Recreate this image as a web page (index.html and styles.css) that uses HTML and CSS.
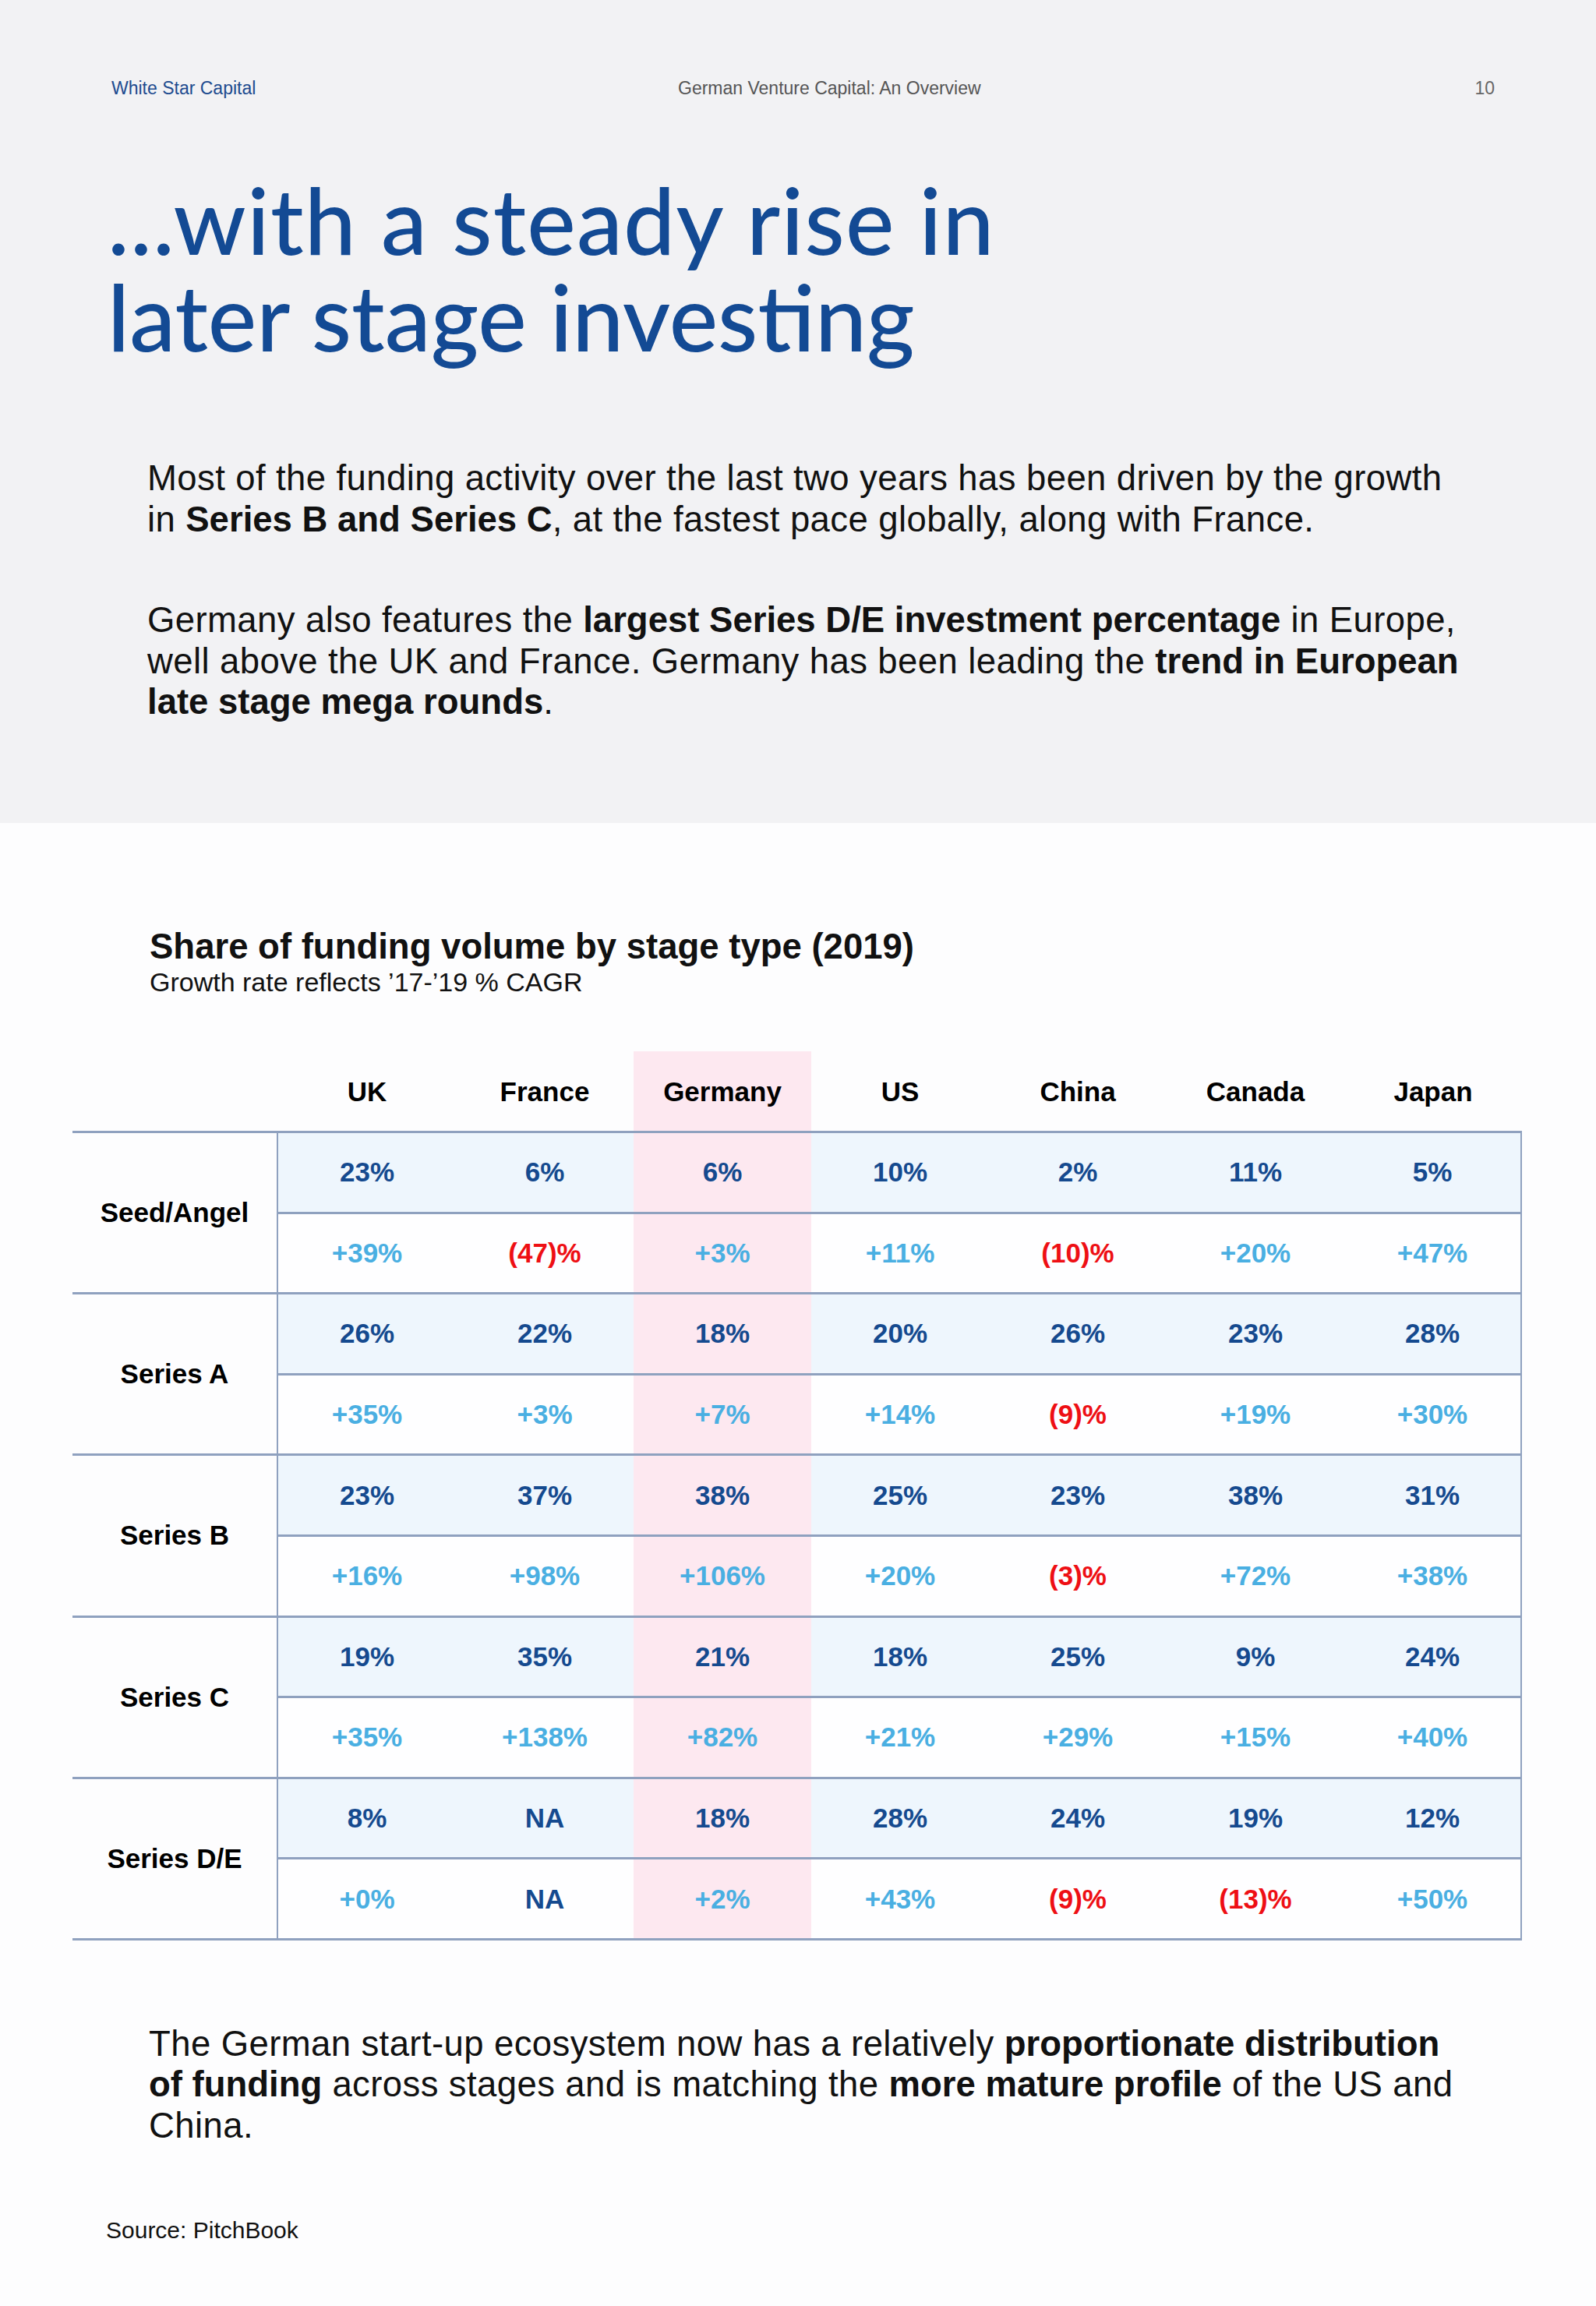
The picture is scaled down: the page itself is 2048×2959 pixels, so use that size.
FILE: index.html
```html
<!DOCTYPE html>
<html lang="en">
<head>
<meta charset="utf-8">
<title>German Venture Capital: An Overview</title>
<link rel="stylesheet" href="styles.css">
</head>
<body>
<section class="intro">
  <header class="page-head">
    <span class="brand">White Star Capital</span>
    <span class="doc-title">German Venture Capital: An Overview</span>
    <span class="page-num">10</span>
  </header>
  <h1 class="headline"><span class="hl-line">...with a steady rise in</span><span class="hl-line">later stage investing</span></h1>
  <p class="lead">Most of the funding activity over the last two years has been driven by the growth<br>in <b>Series B and Series C</b>, at the fastest pace globally, along with France.</p>
  <p class="lead lead-2">Germany also features the <b>largest Series D/E investment percentage</b> in Europe,<br>well above the UK and France. Germany has been leading the <b>trend in European<br>late stage mega rounds</b>.</p>
</section>

<section class="chart">
  <h2 class="chart-title">Share of funding volume by stage type (2019)</h2>
  <p class="chart-sub">Growth rate reflects ’17-’19 % CAGR</p>

  <div class="table">
    <div class="th corner"></div>
    <div class="th">UK</div>
    <div class="th">France</div>
    <div class="th de">Germany</div>
    <div class="th">US</div>
    <div class="th">China</div>
    <div class="th">Canada</div>
    <div class="th last">Japan</div>

    <div class="label">Seed/Angel</div>
    <div class="v">23%</div><div class="v">6%</div><div class="v de">6%</div><div class="v">10%</div><div class="v">2%</div><div class="v">11%</div><div class="v last">5%</div>
    <div class="g">+39%</div><div class="g neg">(47)%</div><div class="g de">+3%</div><div class="g">+11%</div><div class="g neg">(10)%</div><div class="g">+20%</div><div class="g last">+47%</div>

    <div class="label">Series A</div>
    <div class="v">26%</div><div class="v">22%</div><div class="v de">18%</div><div class="v">20%</div><div class="v">26%</div><div class="v">23%</div><div class="v last">28%</div>
    <div class="g">+35%</div><div class="g">+3%</div><div class="g de">+7%</div><div class="g">+14%</div><div class="g neg">(9)%</div><div class="g">+19%</div><div class="g last">+30%</div>

    <div class="label">Series B</div>
    <div class="v">23%</div><div class="v">37%</div><div class="v de">38%</div><div class="v">25%</div><div class="v">23%</div><div class="v">38%</div><div class="v last">31%</div>
    <div class="g">+16%</div><div class="g">+98%</div><div class="g de">+106%</div><div class="g">+20%</div><div class="g neg">(3)%</div><div class="g">+72%</div><div class="g last">+38%</div>

    <div class="label">Series C</div>
    <div class="v">19%</div><div class="v">35%</div><div class="v de">21%</div><div class="v">18%</div><div class="v">25%</div><div class="v">9%</div><div class="v last">24%</div>
    <div class="g">+35%</div><div class="g">+138%</div><div class="g de">+82%</div><div class="g">+21%</div><div class="g">+29%</div><div class="g">+15%</div><div class="g last">+40%</div>

    <div class="label">Series D/E</div>
    <div class="v">8%</div><div class="v">NA</div><div class="v de">18%</div><div class="v">28%</div><div class="v">24%</div><div class="v">19%</div><div class="v last">12%</div>
    <div class="g">+0%</div><div class="g na">NA</div><div class="g de">+2%</div><div class="g">+43%</div><div class="g neg">(9)%</div><div class="g neg">(13)%</div><div class="g last">+50%</div>
  </div>

  <p class="lead closing">The German start-up ecosystem now has a relatively <b>proportionate distribution<br>of funding</b> across stages and is matching the <b>more mature profile</b> of the US and<br>China.</p>

  <p class="source">Source: PitchBook</p>
</section>
</body>
</html>
```

FILE: styles.css
```css
* { box-sizing: border-box; }

html, body {
  margin: 0;
  padding: 0;
}

body {
  width: 2048px;
  height: 2959px;
  background: #fdfdfe;
  font-family: "Liberation Sans", Arial, sans-serif;
  color: #111;
  overflow: hidden;
}

.intro {
  height: 1056px;
  background: #f2f2f4;
  padding-top: 100px;
}

.page-head {
  display: grid;
  grid-template-columns: 727px 1fr auto;
  padding: 0 130px 0 143px;
  font-size: 23px;
  line-height: 26px;
}

.brand { color: #1d4b8f; }
.doc-title { color: #555; }
.page-num { color: #666; }

.headline {
  margin: 94px 0 0 138px;
  font-family: "Lato", "Liberation Sans", sans-serif;
  font-weight: 500;
  font-size: 118px;
  color: #134a94;
}

.hl-line {
  display: block;
  height: 124px;
  line-height: 124px;
}

.hl-line:first-child {
  letter-spacing: 1.2px;
}

.lead {
  margin: 120px 0 0 189px;
  font-size: 45.5px;
  line-height: 52.5px;
  letter-spacing: 0.4px;
  color: #111;
}

.lead b {
  font-weight: 700;
  letter-spacing: 0;
}

.lead-2 { margin-top: 77px; }

.chart {
  padding-top: 133px;
}

.chart-title {
  margin: 0 0 0 192px;
  font-size: 45.5px;
  line-height: 51px;
  font-weight: 700;
  color: #111;
}

.chart-sub {
  margin: 0 0 0 192px;
  font-size: 34px;
  line-height: 40px;
  color: #111;
}

.table {
  margin: 69px 0 0 93px;
  width: 1860px;
  display: grid;
  grid-template-columns: 264px repeat(7, 228px);
  grid-template-rows: 102px repeat(10, 103.6px);
  border-bottom: 3px solid #8fa1bf;
  font-weight: 700;
  font-size: 35px;
}

.table > div {
  display: flex;
  align-items: center;
  justify-content: center;
}

.th {
  color: #000;
  padding-top: 2px;
}

.label {
  grid-row: span 2;
  border-top: 3px solid #8fa1bf;
  border-right: 2px solid #8fa1bf;
  color: #000;
  font-size: 35px;
}

.v {
  border-top: 3px solid #8fa1bf;
  background: #eef6fd;
  color: #154a8f;
}

.g {
  border-top: 3px solid #8fa1bf;
  background: #fefeff;
  color: #4aafe2;
}

.g.neg { color: #ee0f14; }
.g.na { color: #154a8f; }

.de, .v.de, .g.de { background: #fde8f0; }

.v.last, .g.last { border-right: 2px solid #8fa1bf; }

.closing {
  margin: 107px 0 0 191px;
}

.source {
  margin: 90px 0 0 136px;
  font-size: 30px;
  line-height: 36px;
  color: #111;
}
```
